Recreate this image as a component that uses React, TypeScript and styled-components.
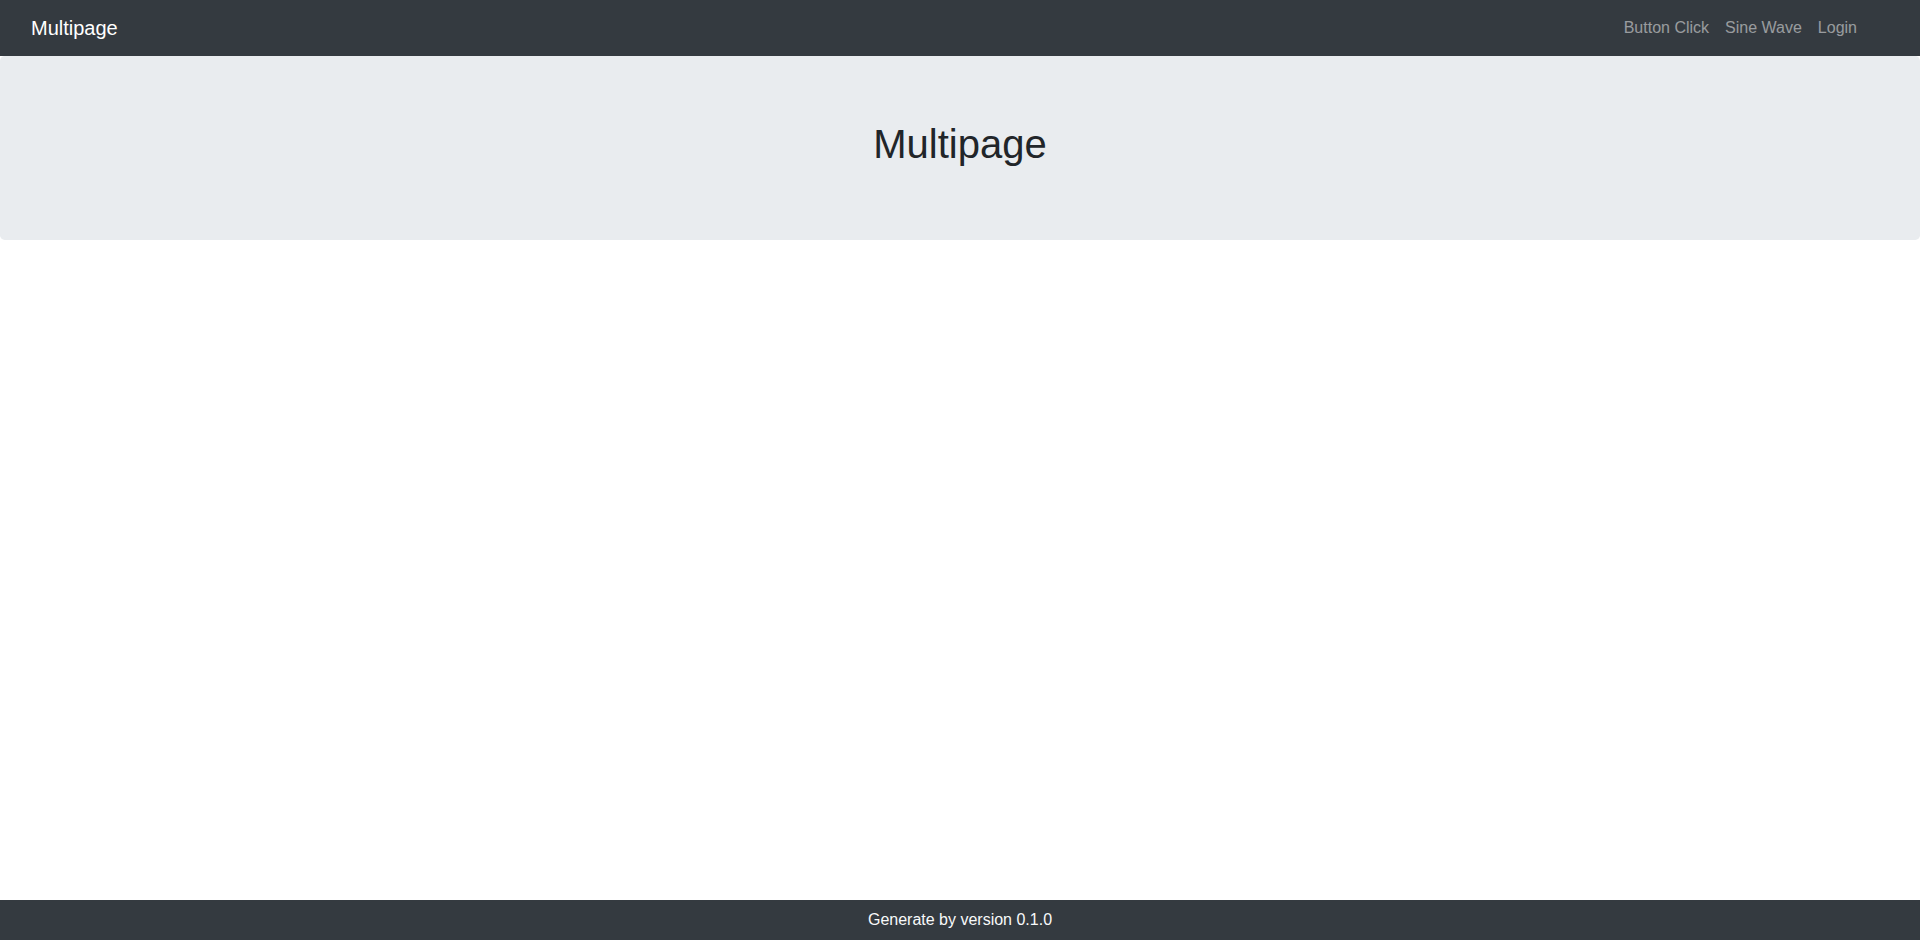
import styled, { createGlobalStyle } from 'styled-components';

const GlobalStyle = createGlobalStyle`
  * {
    box-sizing: border-box;
  }

  body {
    margin: 0;
    font-family: 'Liberation Sans', Arial, sans-serif;
    font-size: 16px;
    line-height: 1.5;
    color: #212529;
    background-color: #fff;
  }
`;

const links = ['Button Click', 'Sine Wave', 'Login'];

export default function App() {
  return (
    <>
      <GlobalStyle />
      <Page>
        <Navbar>
          <Brand href="#">Multipage</Brand>
          <NavList>
            {links.map((label) => (
              <li key={label}>
                <NavLink href="#">{label}</NavLink>
              </li>
            ))}
          </NavList>
        </Navbar>
        <Jumbotron>
          <Title>Multipage</Title>
        </Jumbotron>
        <Content />
        <Footer>Generate by version 0.1.0</Footer>
      </Page>
    </>
  );
}

const Page = styled.div`
  min-height: 100vh;
  display: flex;
  flex-direction: column;
`;

const Navbar = styled.nav`
  height: 56px;
  display: flex;
  align-items: center;
  justify-content: space-between;
  padding: 0 55px 0 31px;
  background-color: #343a40;
`;

const Brand = styled.a`
  font-size: 20px;
  line-height: 30px;
  color: #fff;
  text-decoration: none;
`;

const NavList = styled.ul`
  display: flex;
  list-style: none;
  margin: 0;
  padding: 0;
`;

const NavLink = styled.a`
  display: block;
  padding: 8px;
  color: rgba(255, 255, 255, 0.5);
  text-decoration: none;
`;

const Jumbotron = styled.section`
  padding: 64px 32px;
  background-color: #e9ecef;
  border-radius: 4.8px;
  text-align: center;
`;

const Title = styled.h1`
  margin: 0 0 8px;
  font-size: 40px;
  font-weight: 500;
  line-height: 1.2;
`;

const Content = styled.main`
  flex: 1;
`;

const Footer = styled.footer`
  height: 40px;
  display: flex;
  align-items: center;
  justify-content: center;
  background-color: #343a40;
  color: #f8f9fa;
`;
